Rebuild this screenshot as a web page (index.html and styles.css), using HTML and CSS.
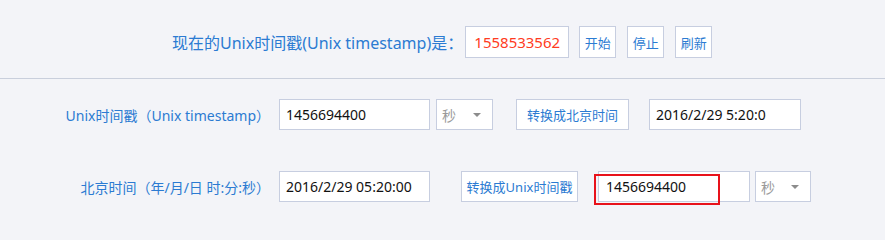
FILE: index.html
```html
<!DOCTYPE html>
<html lang="zh-CN">
<head>
<meta charset="utf-8">
<title>Unix时间戳</title>
<link rel="stylesheet" href="styles.css">
</head>
<body>
<div class="top">
  <div class="top-row">
    <span class="now-label">现在的Unix时间戳(Unix timestamp)是：</span>
    <div class="now-box">1558533562</div>
    <button class="btn btn-sm">开始</button>
    <button class="btn btn-sm">停止</button>
    <button class="btn btn-sm">刷新</button>
  </div>
</div>
<div class="form">
  <div class="row row-1">
    <label class="label">Unix时间戳（Unix timestamp）</label>
    <div class="field">1456694400</div>
    <div class="select sel-1"><span>秒</span><i class="caret"></i></div>
    <button class="btn btn-conv conv-1">转换成北京时间</button>
    <div class="field out-1">2016/2/29 5:20:0</div>
  </div>
  <div class="row row-2">
    <label class="label">北京时间（年/月/日 时:分:秒）</label>
    <div class="field">2016/2/29 05:20:00</div>
    <button class="btn btn-conv conv-2">转换成Unix时间戳</button>
    <div class="marked">
      <div class="field out-2">1456694400</div>
      <div class="highlight"></div>
    </div>
    <div class="select sel-2"><span>秒</span><i class="caret"></i></div>
  </div>
</div>
</body>
</html>
```
FILE: styles.css
```css
html, body {
  margin: 0;
  padding: 0;
}
body {
  background: #f3f4f8;
  font-family: "Noto Sans", "Noto Sans CJK SC", sans-serif;
  width: 885px;
  height: 229px;
  overflow: hidden;
}
.top {
  height: 79px;
  box-sizing: border-box;
  border-bottom: 1px solid #c9cfdc;
  padding: 26px 0 0 172px;
}
.top-row {
  display: flex;
  align-items: center;
  height: 32px;
}
.now-label {
  font-size: 16px;
  color: #2b7bd2;
  white-space: nowrap;
  margin-right: 2px;
}
.now-box {
  width: 104px;
  height: 32px;
  box-sizing: border-box;
  border: 1px solid #c7cee0;
  background: #fff;
  color: #ff3b22;
  font-size: 15px;
  display: flex;
  align-items: center;
  justify-content: center;
  margin-right: 10px;
}
.btn {
  box-sizing: border-box;
  border: 1px solid #c7cee0;
  background: #fff;
  color: #2b7bd2;
  font-family: "Noto Sans", "Noto Sans CJK SC", sans-serif;
  font-size: 13px;
  padding: 0;
  height: 31px;
  display: flex;
  align-items: center;
  justify-content: center;
  white-space: nowrap;
}
.btn-sm {
  width: 37px;
  height: 32px;
  margin-right: 11px;
}
.form {
  padding-top: 20px;
}
.row {
  display: flex;
  align-items: center;
  height: 31px;
}
.row-2 {
  margin-top: 41px;
}
.label {
  width: 270px;
  text-align: right;
  font-size: 14px;
  color: #2b7bd2;
  margin-right: 9px;
  white-space: nowrap;
}
.field {
  width: 151px;
  height: 31px;
  box-sizing: border-box;
  border: 1px solid #c7cee0;
  background: #fff;
  font-size: 14px;
  color: #111;
  padding-left: 6px;
  display: flex;
  align-items: center;
}
.select {
  width: 57px;
  height: 31px;
  box-sizing: border-box;
  border: 1px solid #c7cee0;
  background: #fff;
  font-size: 14px;
  color: #9a9a9a;
  padding: 0 11px 0 5px;
  display: flex;
  align-items: center;
  justify-content: space-between;
}
.caret {
  width: 0;
  height: 0;
  border-left: 4px solid transparent;
  border-right: 4px solid transparent;
  border-top: 4px solid #8c8c8c;
}
.sel-1 {
  margin-left: 6px;
}
.conv-1 {
  width: 113px;
  margin-left: 23px;
}
.out-1 {
  width: 152px;
  margin-left: 20px;
}
.conv-2 {
  width: 117px;
  margin-left: 31px;
}
.marked {
  position: relative;
  margin-left: 20px;
}
.out-2 {
  width: 152px;
  padding-left: 7px;
}
.highlight {
  position: absolute;
  left: -4px;
  top: 3px;
  width: 126px;
  height: 31px;
  box-sizing: border-box;
  border: 2px solid #e8121b;
}
.sel-2 {
  width: 56px;
  margin-left: 5px;
}
```
